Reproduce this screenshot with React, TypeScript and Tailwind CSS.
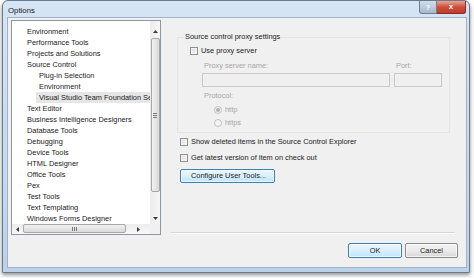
import React from "react";

const font = { fontFamily: '"Liberation Sans", Arial, sans-serif' };

function Check({ label, disabled }: { label: string; disabled?: boolean }) {
  return (
    <div className="flex items-center h-[10px]">
      <div className="w-[8px] h-[8px] border border-[#8f8f8f] bg-gradient-to-br from-[#dcdcdc] to-[#fafafa] shadow-[inset_0_0_0_1px_#f4f4f4]" />
      <span className={`ml-[3px] text-[7.4px] leading-[10px] ${disabled ? "text-[#a0a0a0]" : "text-[#1a1a1a]"}`}>{label}</span>
    </div>
  );
}

function Radio({ label, checked }: { label: string; checked?: boolean }) {
  return (
    <div className="flex items-center h-[10px]">
      <div className="w-[8px] h-[8px] rounded-full border border-[#c2c2c2] bg-[#f4f4f4] flex items-center justify-center">
        {checked && <div className="w-[4px] h-[4px] rounded-full bg-[#b0b0b0]" />}
      </div>
      <span className="ml-[3px] text-[7.4px] leading-[10px] text-[#a6a6a6]">{label}</span>
    </div>
  );
}

const tree: { t: string; lvl: number; sel?: boolean }[] = [
  { t: "Environment", lvl: 0 },
  { t: "Performance Tools", lvl: 0 },
  { t: "Projects and Solutions", lvl: 0 },
  { t: "Source Control", lvl: 0 },
  { t: "Plug-in Selection", lvl: 1 },
  { t: "Environment", lvl: 1 },
  { t: "Visual Studio Team Foundation Server", lvl: 1, sel: true },
  { t: "Text Editor", lvl: 0 },
  { t: "Business Intelligence Designers", lvl: 0 },
  { t: "Database Tools", lvl: 0 },
  { t: "Debugging", lvl: 0 },
  { t: "Device Tools", lvl: 0 },
  { t: "HTML Designer", lvl: 0 },
  { t: "Office Tools", lvl: 0 },
  { t: "Pex", lvl: 0 },
  { t: "Test Tools", lvl: 0 },
  { t: "Text Templating", lvl: 0 },
  { t: "Windows Forms Designer", lvl: 0 },
];

export default function App() {
  return (
    <div className="w-[474px] h-[278px] bg-white overflow-hidden" style={font}>
      <div className="ml-[2px] w-[468px] h-[273px] rounded-t-[6px] border border-[#6b7a8a] bg-gradient-to-b from-[#d6e5f5] via-[#c8dbef] to-[#bcd2ea] shadow-[0_2px_4px_rgba(0,0,0,0.45)] flex flex-col">
        {/* title bar */}
        <div className="h-[16px] flex items-start">
          <span className="ml-[5px] mt-[5px] text-[7.8px] leading-[10px] text-[#1a1a1a]">Options</span>
          <div className="ml-auto mr-[3px] flex">
            <div className="w-[18px] h-[13px] rounded-bl-[3px] border border-t-0 border-[#6d7e91] bg-gradient-to-b from-[#d2dde9] to-[#a8b9cd] flex items-center justify-center text-[7px] font-bold text-white leading-none">?</div>
            <div className="w-[29px] h-[13px] rounded-br-[3px] border border-t-0 border-l-0 border-[#8a2c1e] bg-gradient-to-b from-[#e8a493] via-[#cf4f3b] to-[#c0392a] flex items-center justify-center text-[8px] font-bold text-white leading-none">x</div>
          </div>
        </div>
        {/* client */}
        <div className="ml-[4px] w-[460px] h-[251px] border border-[#9fb2c7] bg-[#f0f0f0] flex flex-col">
          <div className="flex pl-[3px] pt-[2px]">
            {/* tree */}
            <div className="w-[150px] h-[215px] border border-[#8e98a4] bg-white flex flex-col">
              <div className="flex h-[203px]">
                <div className="flex-1 overflow-hidden pt-[5px]">
                  {tree.map((r, i) => (
                    <div key={i} className="h-[11px] flex items-center whitespace-nowrap">
                      <div
                        className={`${r.lvl ? "ml-[24px]" : "ml-[12px]"} pl-[3px] pr-[4px] h-[11px] flex items-center ${r.sel ? "bg-[#e6e6e6] w-full" : ""}`}
                      >
                        <span className="text-[7.4px] leading-[11px] text-[#1a1a1a]">{r.t}</span>
                      </div>
                    </div>
                  ))}
                </div>
                {/* vscroll */}
                <div className="w-[10px] bg-gradient-to-r from-[#ececec] to-[#f7f7f7] flex flex-col items-center">
                  <div className="h-[16px] w-full flex items-center justify-center pt-[4px]">
                    <svg width="5" height="3" viewBox="0 0 5 3"><path d="M0 3 L2.5 0 L5 3Z" fill="#3c3c3c" /></svg>
                  </div>
                  <div className="mt-[1px] w-[9px] h-[154px] rounded-[2px] border border-[#a7a7a7] bg-gradient-to-r from-[#f2f2f2] to-[#d9d9d9] flex items-center justify-center">
                    <div className="flex flex-col gap-[1px]">
                      <div className="w-[4px] h-px bg-[#7a7a7a]" />
                      <div className="w-[4px] h-px bg-[#7a7a7a]" />
                      <div className="w-[4px] h-px bg-[#7a7a7a]" />
                    </div>
                  </div>
                  <div className="flex-1" />
                  <div className="h-[12px] w-full flex items-center justify-center">
                    <svg width="5" height="3" viewBox="0 0 5 3"><path d="M0 0 L2.5 3 L5 0Z" fill="#3c3c3c" /></svg>
                  </div>
                </div>
              </div>
              {/* hscroll */}
              <div className="h-[10px] flex bg-gradient-to-b from-[#ececec] to-[#f7f7f7]">
                <div className="w-[11px] flex items-center justify-center">
                  <svg width="3" height="5" viewBox="0 0 3 5"><path d="M3 0 L0 2.5 L3 5Z" fill="#3c3c3c" /></svg>
                </div>
                <div className="w-[103px] h-[9px] rounded-[2px] border border-[#a7a7a7] bg-gradient-to-b from-[#f2f2f2] to-[#d9d9d9] flex items-center justify-center">
                  <div className="flex gap-[1px]">
                    <div className="w-px h-[4px] bg-[#7a7a7a]" />
                    <div className="w-px h-[4px] bg-[#7a7a7a]" />
                    <div className="w-px h-[4px] bg-[#7a7a7a]" />
                  </div>
                </div>
                <div className="flex-1 flex items-center justify-center">
                  <svg width="3" height="5" viewBox="0 0 3 5"><path d="M0 0 L3 2.5 L0 5Z" fill="#3c3c3c" /></svg>
                </div>
                <div className="w-[10px] bg-[#f0f0f0]" />
              </div>
            </div>
            {/* right panel */}
            <div className="ml-[10px] w-[284px] h-[215px] flex flex-col">
              <fieldset className="mt-[13px] ml-[6px] w-[269px] border border-[#e4e4e4] px-[7px] pb-[4px]">
                <legend className="text-[7.4px] leading-[8px] text-[#1a1a1a] px-0">Source control proxy settings</legend>
                <div className="mt-[5px] ml-[5px]">
                  <Check label="Use proxy server" />
                </div>
                <div className="mt-[5px] ml-[17px] flex">
                  <div className="w-[188px]">
                    <div className="pl-[2px] h-[10px] text-[7.4px] leading-[10px] text-[#a6a6a6]">Proxy server name:</div>
                    <div className="mt-[2px] h-[14px] border border-[#c9c9c9] bg-[#f0f0f0]" />
                  </div>
                  <div className="ml-[4px] w-[48px]">
                    <div className="pl-[2px] h-[10px] text-[7.4px] leading-[10px] text-[#a6a6a6]">Port:</div>
                    <div className="mt-[2px] h-[14px] border border-[#c9c9c9] bg-[#f0f0f0]" />
                  </div>
                </div>
                <div className="mt-[4px] ml-[19px] h-[10px] text-[7.4px] leading-[10px] text-[#a6a6a6]">Protocol:</div>
                <div className="mt-[4px] ml-[29px]">
                  <Radio label="http" checked />
                </div>
                <div className="mt-[3px] ml-[29px]">
                  <Radio label="https" />
                </div>
              </fieldset>
              <div className="mt-[4px] ml-[9px]">
                <Check label="Show deleted items in the Source Control Explorer" />
              </div>
              <div className="mt-[6px] ml-[9px]">
                <Check label="Get latest version of item on check out" />
              </div>
              <div className="mt-[6px] ml-[9px] w-[95px] h-[14px] rounded-[2px] border border-[#3c7fb1] bg-gradient-to-b from-[#eaf6fd] via-[#d9f0fc] to-[#bee6fd] shadow-[inset_0_0_0_1px_rgba(255,255,255,0.7)] flex items-center pl-[10px]">
                <span className="text-[7.4px] leading-[10px] text-[#1a1a1a]">Configure User Tools...</span>
              </div>
              <div className="mt-auto mb-[1px] border-t border-[#d5d5d5] border-b border-b-white" />
            </div>
          </div>
          {/* buttons */}
          <div className="mt-[8px] flex justify-end pr-[8px] gap-[3px]">
            <div className="w-[54px] h-[15px] rounded-[2px] border border-[#3c7fb1] bg-gradient-to-b from-[#eaf6fd] via-[#d9f0fc] to-[#bee6fd] shadow-[inset_0_0_0_1px_rgba(255,255,255,0.7)] flex items-center justify-center">
              <span className="text-[7.4px] leading-[10px] text-[#1a1a1a]">OK</span>
            </div>
            <div className="w-[53px] h-[15px] rounded-[2px] border border-[#8a8a8a] bg-gradient-to-b from-[#f2f2f2] via-[#ebebeb] to-[#d6d6d6] shadow-[inset_0_0_0_1px_rgba(255,255,255,0.7)] flex items-center justify-center">
              <span className="text-[7.4px] leading-[10px] text-[#1a1a1a]">Cancel</span>
            </div>
          </div>
        </div>
      </div>
    </div>
  );
}
